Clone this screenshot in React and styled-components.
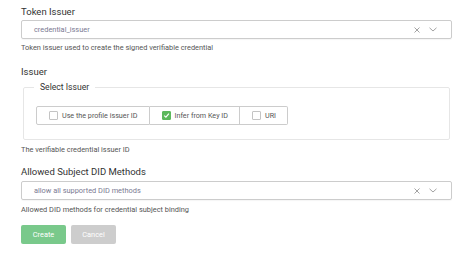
import React from 'react';
import styled, { createGlobalStyle } from 'styled-components';

const Global = createGlobalStyle`
    body{
        margin: 0;
        background: #ffffff;
        font-family: Roboto, "Liberation Sans", sans-serif;
        color: #333333;
    }
`;

const Form = styled.div`
    padding: 6px 22px 0px 21px;
`;

const Label = styled.div`
    font-size: 9.5px;
    line-height: 12px;
    color: #333333;
    margin-top: ${p => p.top || 0}px;
    margin-bottom: ${p => p.bottom || 2}px;
`;

const Help = styled.div`
    font-size: 7.4px;
    line-height: 10px;
    color: #555555;
    margin-top: ${p => p.top || 4}px;
`;

const Select = styled.div`
    display: flex;
    align-items: center;
    height: 17px;
    border: 1px solid #cccccc;
    border-radius: 2px;
    box-shadow: 0 1px 1px rgba(0, 0, 0, 0.04);
    padding: 0px 12px;
    .value{
        flex: 1;
        font-size: 7.4px;
        color: #7a7a92;
    }
    .icons{
        display: flex;
        align-items: center;
        gap: 9px;
        margin-right: 2px;
    }
`;

const Fieldset = styled.fieldset`
    margin: 4px 2px 0px 2px;
    padding: 0px 12px 14px 12px;
    border: 1px solid #e6e6e6;
    border-radius: 2px;
    legend{
        font-size: 8.6px;
        line-height: 11px;
        color: #333333;
        padding: 0px 6px;
        margin-left: -2px;
    }
`;

const Group = styled.div`
    display: flex;
    margin-top: 13px;
`;

const Segment = styled.label`
    display: flex;
    align-items: center;
    gap: 4px;
    height: 17px;
    padding: 0px 11px 0px 12px;
    border: 1px solid #cccccc;
    border-left-width: ${p => (p.first ? 1 : 0)}px;
    border-radius: ${p => (p.first ? '2px 0 0 2px' : p.last ? '0 2px 2px 0' : '0')};
    font-size: 7.2px;
    color: #555555;
`;

const Box = styled.span`
    width: 7px;
    height: 7px;
    border: 1px solid ${p => (p.checked ? '#5cb85c' : '#c4c4c4')};
    background: ${p => (p.checked ? '#5cb85c' : '#ffffff')};
    border-radius: 1px;
    display: flex;
    align-items: center;
    justify-content: center;
`;

const Buttons = styled.div`
    display: flex;
    gap: 5px;
    margin-top: 10px;
`;

const Button = styled.button`
    width: 45px;
    height: 19px;
    border: none;
    border-radius: 2px;
    background: ${p => (p.primary ? '#79c98b' : '#cdcdcd')};
    color: #ffffff;
    font-family: Roboto, "Liberation Sans", sans-serif;
    font-size: 7.4px;
    padding: 0;
`;

const Clear = () => (
    <svg width="6" height="6" viewBox="0 0 6 6">
        <path d="M0.5 0.5 L5.5 5.5 M5.5 0.5 L0.5 5.5" stroke="#999" strokeWidth="0.9" />
    </svg>
);

const Chevron = () => (
    <svg width="8" height="5" viewBox="0 0 8 5">
        <path d="M0.5 0.8 L4 4 L7.5 0.8" stroke="#999" strokeWidth="0.9" fill="none" />
    </svg>
);

const Tick = () => (
    <svg width="7" height="7" viewBox="0 0 7 7">
        <path d="M1.2 3.6 L2.9 5.2 L5.9 1.6" stroke="#fff" strokeWidth="1.1" fill="none" />
    </svg>
);

const Dropdown = ({ value }) => (
    <Select>
        <span className="value">{value}</span>
        <span className="icons">
            <Clear />
            <Chevron />
        </span>
    </Select>
);

const App = () => {
    return (
        <Form>
            <Global />
            <Label>Token Issuer</Label>
            <Dropdown value="credential_issuer" />
            <Help>Token issuer used to create the signed verifiable credential</Help>

            <Label top={13} bottom={0}>Issuer</Label>
            <Fieldset>
                <legend>Select Issuer</legend>
                <Group>
                    <Segment first>
                        <Box />
                        Use the profile issuer ID
                    </Segment>
                    <Segment>
                        <Box checked><Tick /></Box>
                        Infer from Key ID
                    </Segment>
                    <Segment last>
                        <Box />
                        URI
                    </Segment>
                </Group>
            </Fieldset>
            <Help top={5}>The verifiable credential issuer ID</Help>

            <Label top={11} bottom={3}>Allowed Subject DID Methods</Label>
            <Dropdown value="allow all supported DID methods" />
            <Help top={5}>Allowed DID methods for credential subject binding</Help>

            <Buttons>
                <Button primary>Create</Button>
                <Button>Cancel</Button>
            </Buttons>
        </Form>
    );
};

export default App;
